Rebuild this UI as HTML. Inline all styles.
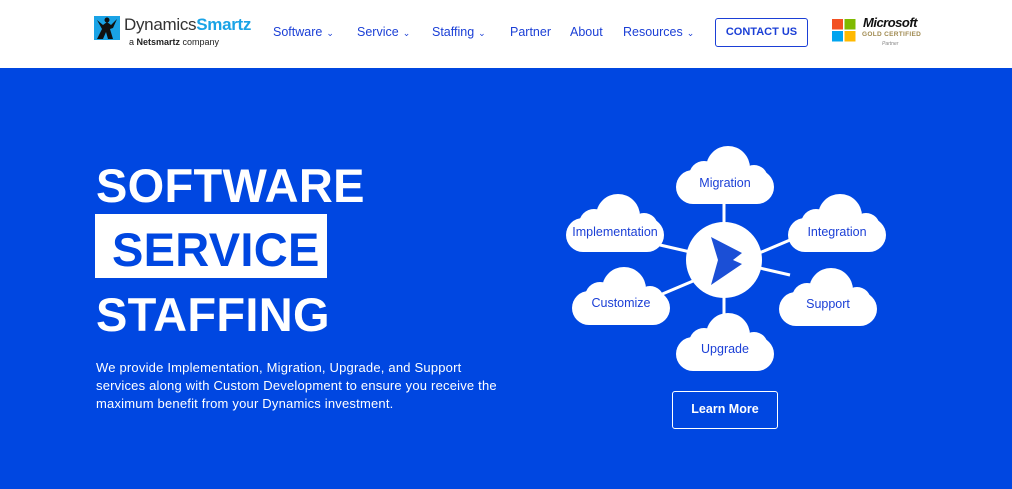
<!DOCTYPE html>
<html><head><meta charset="utf-8">
<style>
*{margin:0;padding:0;box-sizing:border-box}
body{width:1012px;height:489px;overflow:hidden;background:#0047e1;font-family:"Liberation Sans",sans-serif;position:relative}
.hdr{position:absolute;left:0;top:0;width:1012px;height:68px;background:#fff}
.nav{position:absolute;top:25px;font-size:12.5px;color:#1b3fd6;white-space:nowrap}
.nav span.c{font-size:9px;margin-left:4px}
.btn{position:absolute;left:715px;top:18px;width:93px;height:29px;border:1.5px solid #1b3fd6;border-radius:3px;color:#1b3fd6;font-size:11px;font-weight:bold;text-align:center;line-height:26px}
.h{position:absolute;color:#fff;font-weight:bold;font-size:47px;letter-spacing:0.3px;line-height:1}
.p{position:absolute;left:96px;top:359px;color:#fff;font-size:13px;line-height:18px;width:408px;letter-spacing:0.2px}
.lm{position:absolute;left:672px;top:391px;width:106px;height:38px;border:1.5px solid #fff;border-radius:3px;color:#fff;font-size:12.5px;font-weight:bold;text-align:center;line-height:35px}
</style></head><body>
<div class="hdr">
  <svg style="position:absolute;left:94px;top:16px" width="26" height="24" viewBox="0 0 26 24">
    <rect x="0" y="0" width="26" height="24" fill="#1aa3e6"/>
    <path d="M3 4 L9 9 L13 6 L17 9 L23 3 L19 12 L16 13 L19 23 L14 23 L12 16 L9 23 L3 23 L8 13 Z" fill="#111"/>
    <circle cx="13" cy="4" r="2.5" fill="#111"/>
  </svg>
  <div style="position:absolute;left:124px;top:15px;font-size:17px;color:#333;letter-spacing:-0.3px">Dynamics<b style="color:#1aa3e6">Smartz</b></div>
  <div style="position:absolute;left:129px;top:37px;font-size:9px;color:#222">a <b>Netsmartz</b> company</div>
  <div class="nav" style="left:273px">Software<span class="c">⌄</span></div>
  <div class="nav" style="left:357px">Service<span class="c">⌄</span></div>
  <div class="nav" style="left:432px">Staffing<span class="c">⌄</span></div>
  <div class="nav" style="left:510px">Partner</div>
  <div class="nav" style="left:570px">About</div>
  <div class="nav" style="left:623px">Resources<span class="c">⌄</span></div>
  <div class="btn">CONTACT US</div>
  <svg style="position:absolute;left:832px;top:19px" width="24" height="23">
    <rect x="0" y="0" width="11" height="10.5" fill="#f25022"/><rect x="12.5" y="0" width="11" height="10.5" fill="#7fba00"/>
    <rect x="0" y="12" width="11" height="10.5" fill="#00a4ef"/><rect x="12.5" y="12" width="11" height="10.5" fill="#ffb900"/>
  </svg>
  <div style="position:absolute;left:863px;top:15px;font-size:13px;font-weight:bold;font-style:italic;color:#111;letter-spacing:-0.5px">Microsoft</div>
  <div style="position:absolute;left:862px;top:31px;font-size:6.5px;font-weight:bold;color:#a08a50;letter-spacing:0.3px">GOLD CERTIFIED</div>
  <div style="position:absolute;left:882px;top:41px;font-size:5px;color:#888;font-style:italic">Partner</div>
</div>

<div class="h" style="left:96px;top:162px">SOFTWARE</div>
<div style="position:absolute;left:95px;top:214px;width:232px;height:64px;background:#fff"></div>
<div class="h" style="left:112px;top:226px;color:#0047e1">SERVICE</div>
<div class="h" style="left:96px;top:291px">STAFFING</div>
<div class="p">We provide Implementation, Migration, Upgrade, and Support services along with Custom Development to ensure you receive the maximum benefit from your Dynamics investment.</div>

<svg style="position:absolute;left:0;top:0" width="1012" height="489">
  <defs>
    <g id="cl" fill="#fff">
      <rect x="0" y="24" width="98" height="34" rx="17"/>
      <circle cx="52" cy="22" r="22"/>
      <circle cx="28" cy="30" r="15"/>
      <circle cx="78" cy="33" r="14"/>
    </g>
  </defs>
  <g stroke="#fff" stroke-width="3">
    <line x1="724" y1="200" x2="724" y2="330"/>
    <line x1="660" y1="245" x2="790" y2="275"/>
    <line x1="660" y1="295" x2="790" y2="240"/>
  </g>
  <use href="#cl" x="676" y="146"/>
  <use href="#cl" x="566" y="194"/>
  <use href="#cl" x="788" y="194"/>
  <use href="#cl" x="572" y="267"/>
  <use href="#cl" x="779" y="268"/>
  <use href="#cl" x="676" y="313"/>
  <circle cx="724" cy="260" r="38" fill="#fff"/>
  <path d="M711 237 L742 253 L733 260 L742 264 L711 285 L718 260 Z" fill="#1b4fd6"/>
  <g fill="#1b3fd6" font-family="Liberation Sans,sans-serif" font-size="12.5" text-anchor="middle">
    <text x="725" y="187">Migration</text>
    <text x="615" y="236">Implementation</text>
    <text x="837" y="236">Integration</text>
    <text x="621" y="307">Customize</text>
    <text x="828" y="308">Support</text>
    <text x="725" y="353">Upgrade</text>
  </g>
</svg>
<div class="lm">Learn More</div>
</body></html>
